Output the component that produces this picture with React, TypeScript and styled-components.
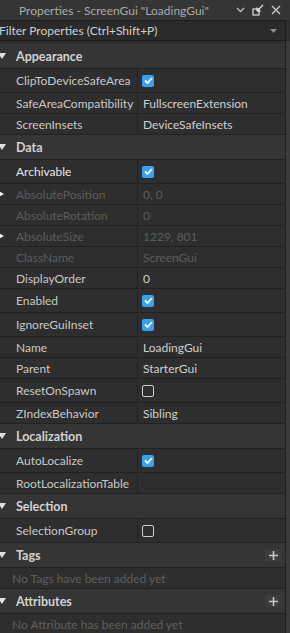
import styled, { createGlobalStyle } from 'styled-components'

const GlobalStyle = createGlobalStyle`
  html, body {
    margin: 0;
    padding: 0;
    background: #2e2e2e;
  }
  body {
    font-family: Lato, "Noto Sans", sans-serif;
    font-size: 12px;
    overflow: hidden;
  }
`;

const Panel = styled.div`
  width: 290px;
  height: 633px;
  display: flex;
  flex-direction: column;
  background: #2e2e2e;
  overflow: hidden;
`;

const TitleBar = styled.div`
  height: 20px;
  flex: none;
  display: flex;
  align-items: center;
  background: #353535;
  color: #a9a9a9;
  padding-left: 19px;
  padding-right: 9px;
  font-size: 12px;
`;

const TitleText = styled.div`
  flex: 1;
  white-space: nowrap;
`;

const TitleIcons = styled.div`
  display: flex;
  align-items: center;
  gap: 7px;
`;

const FilterBar = styled.div`
  height: 19px;
  flex: none;
  display: flex;
  align-items: center;
  background: #2a2a2a;
  border-top: 1px solid #1c1c1c;
  border-bottom: 1px solid #1c1c1c;
  border-right: 1px solid #1c1c1c;
  margin-right: 4px;
  color: #cfcfcf;
  padding-right: 8px;
`;

const FilterText = styled.div`
  flex: 1;
  margin-left: -1px;
  white-space: nowrap;
`;

const Body = styled.div`
  flex: 1;
  display: flex;
  min-height: 0;
`;

const List = styled.div`
  flex: 1;
  padding-top: 3px;
  display: flex;
  flex-direction: column;
  border-right: 1px solid #222;
`;

const Scrollbar = styled.div`
  width: 4px;
  background: #3a3a3a;
`;

const SectionHeader = styled.div`
  height: 24px;
  flex: none;
  display: flex;
  align-items: center;
  background: #353535;
  border-bottom: 1px solid #222;
  color: #d2d2d2;
  font-weight: 700;
  font-size: 12.5px;
  padding-right: 4px;
`;

const Arrow = styled.div`
  width: 18px;
  display: flex;
  align-items: center;
  margin-left: -2px;
`;

const HeaderTitle = styled.div`
  flex: 1;
`;

const AddButton = styled.div`
  width: 16px;
  height: 12px;
  background: #3d3d3d;
  display: flex;
  align-items: center;
  justify-content: center;
`;

const Row = styled.div<{ $tall?: boolean }>`
  height: ${(p) => (p.$tall ? 23 : 20)}px;
  flex: none;
  display: flex;
  border-bottom: 1px solid #222;
  position: relative;
`;

const NameCell = styled.div<{ $disabled?: boolean; $bright?: boolean }>`
  width: 121px;
  padding-left: 16px;
  display: flex;
  align-items: center;
  border-right: 1px solid #222;
  color: ${(p) => (p.$disabled ? '#5c5c5c' : p.$bright ? '#e6e6e6' : '#c8c8c8')};
  white-space: nowrap;
  overflow: hidden;
`;

const ValueCell = styled.div<{ $disabled?: boolean }>`
  flex: 1;
  display: flex;
  align-items: center;
  padding-left: 5px;
  color: ${(p) => (p.$disabled ? '#5c5c5c' : '#cfcfcf')};
  white-space: nowrap;
`;

const Expander = styled.div`
  position: absolute;
  left: -3px;
  top: 50%;
  margin-top: -4px;
  width: 0;
  height: 0;
  border-top: 4px solid transparent;
  border-bottom: 4px solid transparent;
  border-left: 7px solid #f0f0f0;
`;

const Check = styled.div<{ $on: boolean }>`
  width: 12px;
  height: 12px;
  box-sizing: border-box;
  border-radius: 2px;
  margin-left: -1px;
  display: flex;
  align-items: center;
  justify-content: center;
  background: ${(p) => (p.$on ? '#35a2f4' : 'transparent')};
  border: ${(p) => (p.$on ? 'none' : '1px solid #cfcfcf')};
`;

const Message = styled.div`
  height: 20px;
  flex: none;
  display: flex;
  align-items: center;
  padding-left: 12px;
  color: #5e5e5e;
  border-bottom: 1px solid #222;
  white-space: nowrap;
`;

type Prop = {
  name: string;
  value?: string;
  check?: boolean;
  disabled?: boolean;
  expand?: boolean;
  bright?: boolean;
};

type Section = {
  title: string;
  props?: Prop[];
  empty?: string;
  add?: boolean;
};

const sections: Section[] = [
  {
    title: 'Appearance',
    props: [
      { name: 'ClipToDeviceSafeArea', check: true },
      { name: 'SafeAreaCompatibility', value: 'FullscreenExtension' },
      { name: 'ScreenInsets', value: 'DeviceSafeInsets' },
    ],
  },
  {
    title: 'Data',
    props: [
      { name: 'Archivable', check: true, bright: true },
      { name: 'AbsolutePosition', value: '0, 0', disabled: true, expand: true },
      { name: 'AbsoluteRotation', value: '0', disabled: true },
      { name: 'AbsoluteSize', value: '1229, 801', disabled: true, expand: true },
      { name: 'ClassName', value: 'ScreenGui', disabled: true },
      { name: 'DisplayOrder', value: '0' },
      { name: 'Enabled', check: true },
      { name: 'IgnoreGuiInset', check: true },
      { name: 'Name', value: 'LoadingGui' },
      { name: 'Parent', value: 'StarterGui' },
      { name: 'ResetOnSpawn', check: false },
      { name: 'ZIndexBehavior', value: 'Sibling' },
    ],
  },
  {
    title: 'Localization',
    props: [
      { name: 'AutoLocalize', check: true },
      { name: 'RootLocalizationTable', value: '' },
    ],
  },
  {
    title: 'Selection',
    props: [{ name: 'SelectionGroup', check: false }],
  },
  { title: 'Tags', empty: 'No Tags have been added yet', add: true },
  { title: 'Attributes', empty: 'No Attribute has been added yet', add: true },
];

function CheckMark() {
  return (
    <svg width="9" height="7" viewBox="0 0 9 7">
      <path d="M1 3.5 L3.5 6 L8 1" fill="none" stroke="#fff" strokeWidth="1.8" />
    </svg>
  );
}

function App() {
  return (
    <>
      <GlobalStyle />
      <Panel>
        <TitleBar>
          <TitleText>Properties - ScreenGui "LoadingGui"</TitleText>
          <TitleIcons>
            <svg width="9" height="6" viewBox="0 0 9 6">
              <path d="M1 1 L4.5 4.5 L8 1" fill="none" stroke="#bdbdbd" strokeWidth="1.4" />
            </svg>
            <svg width="12" height="12" viewBox="0 0 12 12">
              <rect x="1" y="5" width="6" height="6" fill="none" stroke="#e0e0e0" strokeWidth="1.2" />
              <path d="M5 7 L11 1 M5 7 L5 3.5 M5 7 L8.5 7" fill="none" stroke="#e0e0e0" strokeWidth="1.3" />
            </svg>
            <svg width="10" height="10" viewBox="0 0 10 10">
              <path d="M1 1 L9 9 M9 1 L1 9" stroke="#c8c8c8" strokeWidth="1.4" />
            </svg>
          </TitleIcons>
        </TitleBar>
        <FilterBar>
          <FilterText>Filter Properties (Ctrl+Shift+P)</FilterText>
          <svg width="7" height="4" viewBox="0 0 7 4">
            <path d="M0 0 L7 0 L3.5 4 Z" fill="#8a8a8a" />
          </svg>
        </FilterBar>
        <Body>
          <List>
            {sections.map((s) => (
              <div key={s.title} style={{ display: 'contents' }}>
                <SectionHeader>
                  <Arrow>
                    <svg width="8" height="6" viewBox="0 0 8 6">
                      <path d="M0 0 L8 0 L4 6 Z" fill="#e0e0e0" />
                    </svg>
                  </Arrow>
                  <HeaderTitle>{s.title}</HeaderTitle>
                  {s.add && (
                    <AddButton>
                      <svg width="9" height="9" viewBox="0 0 9 9">
                        <path d="M4.5 0 V9 M0 4.5 H9" stroke="#c8c8c8" strokeWidth="1.6" />
                      </svg>
                    </AddButton>
                  )}
                </SectionHeader>
                {s.props?.map((p) => (
                  <Row key={p.name} $tall={p.check !== undefined}>
                    {p.expand && <Expander />}
                    <NameCell $disabled={p.disabled} $bright={p.bright}>
                      {p.name}
                    </NameCell>
                    <ValueCell $disabled={p.disabled}>
                      {p.check !== undefined ? (
                        <Check $on={p.check}>{p.check && <CheckMark />}</Check>
                      ) : (
                        p.value
                      )}
                    </ValueCell>
                  </Row>
                ))}
                {s.empty && <Message>{s.empty}</Message>}
              </div>
            ))}
          </List>
          <Scrollbar />
        </Body>
      </Panel>
    </>
  )
}

export default App
